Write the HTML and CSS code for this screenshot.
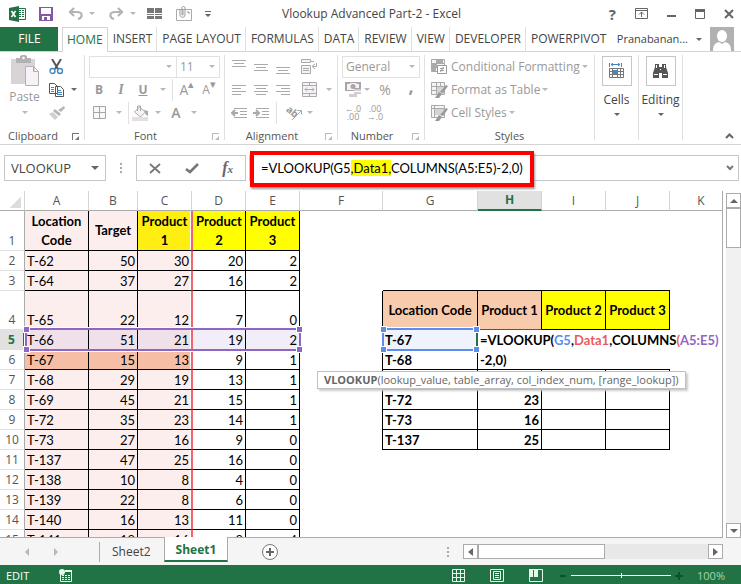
FILE: index.html
```
<!DOCTYPE html>
<html lang="en">
<head>
    <meta charset="UTF-8">
    <meta name="viewport" content="width=device-width, initial-scale=1.0">
    <title>Vlookup Advanced Part-2 - Excel</title>
    <link rel="stylesheet" href="styles.css">
</head>
<body>
    <header class="titlebar">
        <div class="quick-access">
            <svg class="logo" width="17" height="16" viewBox="0 0 17 16"><path fill="#217346" d="M0 2l10-2v16L0 14z"/><path fill="#fff" stroke="#217346" d="M9.500 2.500h7v11h-7z"/><path stroke="#217346" stroke-dasharray="2 1" d="M10 4.500h6M10 6.500h6M10 8.500h6M10 10.500h6"/><path stroke="#fff" stroke-width="1.600" d="M2.500 5l4 6M6.500 5l-4 6"/></svg>
            <button class="qa qa-save" aria-label="Save"><svg width="14" height="14" viewBox="0 0 14 14"><path fill="#8657a9" d="M0 0h14v14H0z"/><path fill="#fff" d="M2 1h10v6H2zM3 9h8v4H3z"/><path fill="#8657a9" d="M5 10h3v3H5z"/></svg></button>
            <button class="qa qa-undo" aria-label="Undo"><svg width="15" height="13" viewBox="0 0 15 13"><path fill="none" stroke="#b4b4b4" stroke-width="2.200" d="M6 1L2 5l4 4M2 5h7c6 0 6 6 1 7"/></svg><i class="caret pale"></i></button>
            <button class="qa qa-redo" aria-label="Redo"><svg width="15" height="13" viewBox="0 0 15 13"><path fill="none" stroke="#b4b4b4" stroke-width="2.200" d="M9 1l4 4-4 4M13 5H6C0 5 0 11 5 12"/></svg><i class="caret pale"></i></button>
            <button class="qa qa-split" aria-label="Arrange"><svg width="15" height="12" viewBox="0 0 15 12"><path fill="#777" d="M0 0h7v5H0zM8 0h7v5H8zM0 6h7v1H0zM8 6h7v1H8zM0 8h7v3H0zM8 8h7v3H8z"/></svg></button>
            <button class="qa qa-mail" aria-label="Email"><svg width="16" height="15" viewBox="0 0 16 15"><path fill="#fff" stroke="#aaa" d="M.5 3.500h15v11H.5z"/><path fill="none" stroke="#999" d="M4 3v6c0 3 5 3 5 0V2c0-2-3-2-3 0v7h1V4M11 6h2v2"/></svg></button>
            <button class="qa" aria-label="Customize"><svg width="6" height="6" viewBox="0 0 6 6"><path fill="#666" d="M0 0h6v1H0zM0 3h6L3 6z"/></svg></button>
        </div>
        <h1 class="title">Vlookup Advanced Part-2 - Excel</h1>
        <div class="window-buttons">
            <button class="help" aria-label="Help">?</button>
            <button aria-label="Ribbon options"><svg width="13" height="11" viewBox="0 0 13 11"><path fill="none" stroke="#666" d="M.5.5h12v10H.5zM1 2.500h11M6.500 9V4M4 6.500L6.500 4 9 6.500"/></svg></button>
            <button aria-label="Minimize"><svg width="9" height="10" viewBox="0 0 9 10"><path fill="#666" d="M0 6h9v2H0z"/></svg></button>
            <button aria-label="Maximize"><svg width="10" height="10" viewBox="0 0 10 10"><path fill="none" stroke="#666" d="M.5.5h9v9h-9z"/><path fill="#666" d="M0 0h10v3H0z"/></svg></button>
            <button aria-label="Close"><svg width="10" height="10" viewBox="0 0 10 10"><path stroke="#666" stroke-width="2" d="M1 1l8 8M9 1L1 9"/></svg></button>
        </div>
    </header>

    <nav class="tabs">
        <button class="tab file">FILE</button>
        <button class="tab active">HOME</button>
        <button class="tab">INSERT</button>
        <button class="tab">PAGE LAYOUT</button>
        <button class="tab">FORMULAS</button>
        <button class="tab">DATA</button>
        <button class="tab">REVIEW</button>
        <button class="tab">VIEW</button>
        <button class="tab">DEVELOPER</button>
        <button class="tab">POWERPIVOT</button>
        <button class="account">Pranabanan... <i class="caret"></i>
            <svg width="24" height="24" viewBox="0 0 24 24"><path fill="#b1b1b1" d="M0 0h24v24H0z"/><ellipse cx="12" cy="9" rx="5" ry="6" fill="#fff"/><path fill="#fff" d="M3 24c0-6 2-8 6-9l3 2 3-2c4 1 6 3 6 9z"/></svg>
        </button>
    </nav>

    <section class="ribbon">
        <div class="group clipboard">
            <div class="group-body">
                <button class="paste">
                    <svg width="28" height="32" viewBox="0 0 28 32"><path fill="#d8d4d6" d="M0 4h24v25H0z"/><path fill="#b1b1b1" d="M5 3h4V1l2-1h3l2 1v2h4v5H5z"/><circle cx="12.500" cy="3" r="1.200" fill="#fff"/><path fill="#f7f2f8" stroke="#b1b1b1" d="M14.500 11.500h8l5 5v14h-13zM22.500 11.500v5h5"/></svg>
                    <span>Paste</span>
                    <i class="caret pale"></i>
                </button>
                <div class="clip-tools">
                    <button aria-label="Cut"><svg width="15" height="16" viewBox="0 0 15 16"><path stroke="#555" stroke-width="2" d="M3 0l6 10M12 0L6 10"/><circle cx="3.500" cy="12" r="2.500" fill="none" stroke="#4585c0" stroke-width="1.400"/><circle cx="11" cy="12" r="2.500" fill="none" stroke="#4585c0" stroke-width="1.400"/></svg></button>
                    <button aria-label="Copy"><svg width="15" height="14" viewBox="0 0 15 14"><path fill="#fff" stroke="#555" d="M.5.500h5l3 3v7h-8zM6.500 3.500h5l3 3v7h-8z"/><path stroke="#4585c0" d="M2 4.500h3M2 6.500h3M2 8.500h3M8 7.500h4M8 9.500h5M8 11.500h5"/></svg><i class="caret"></i></button>
                    <button aria-label="Format painter"><svg width="16" height="14" viewBox="0 0 16 14"><path fill="#b9b4b8" d="M15 0l1 2-4 4-3-2zM6 3l6 5-2 2-6-5z"/><path fill="#d2cdd1" d="M4 6l5 5-3 3-6-6z"/></svg></button>
                </div>
            </div>
            <div class="group-label">Clipboard<i class="launcher dark"></i></div>
        </div>

        <div class="group font">
            <div class="group-body rows">
                <div class="row">
                    <select class="combo name" aria-label="Font"><option></option></select>
                    <select class="combo size" aria-label="Font size"><option>11</option></select>
                </div>
                <div class="row">
                    <button class="tool bold">B</button>
                    <button class="tool italic">I</button>
                    <button class="tool underline">U</button>
                    <i class="caret pale"></i>
                    <span class="divider"></span>
                    <button class="tool grow">A<sup>▴</sup></button>
                    <button class="tool shrink">A<sup>▾</sup></button>
                </div>
                <div class="row">
                    <button class="tool" aria-label="Borders"><svg width="13" height="13" viewBox="0 0 13 13"><path fill="#fbf7fc" stroke="#a5a5a5" d="M.5.5h12v12H.5zM6.500 0v13M0 6.500h13"/></svg></button>
                    <i class="caret pale"></i>
                    <span class="divider"></span>
                    <button class="tool fill" aria-label="Fill color"><svg width="17" height="16" viewBox="0 0 17 16"><path fill="#f7f2f8" stroke="#aaa" d="M2.500 7l5-5 6 5-5 5zM5.500 6V1h3v5"/><path fill="#aaa" d="M12 5l4 1v5l-2-1z"/><path fill="#e3dfe2" d="M0 12h16v4H0z"/></svg></button>
                    <i class="caret pale tight"></i>
                    <button class="tool font-color">A</button>
                    <i class="caret pale tight"></i>
                </div>
            </div>
            <div class="group-label">Font<i class="launcher"></i></div>
        </div>

        <div class="group alignment">
            <div class="group-body rows">
                <div class="row">
                    <button class="tool" aria-label="Top align"><svg width="14" height="14" viewBox="0 0 14 14"><path stroke="#aaa" d="M0 .5h14M2 3.500h10M0 6.500h14"/></svg></button>
                    <button class="tool" aria-label="Middle align"><svg width="14" height="14" viewBox="0 0 14 14"><path stroke="#aaa" d="M0 4.500h14M2 7.500h10M0 10.500h14"/></svg></button>
                    <button class="tool" aria-label="Bottom align"><svg width="14" height="14" viewBox="0 0 14 14"><path stroke="#aaa" d="M0 7.500h14M2 10.500h10M0 13.500h14"/></svg></button>
                    <button class="tool wide" aria-label="Wrap text"><svg width="16" height="15" viewBox="0 0 16 15"><path fill="#f7f2f8" stroke="#aaa" d="M.5.5h9v3h-9zM.5 6.500h9v8h-9z"/><path fill="none" stroke="#aaa" d="M2 9.500h6M2 11.500h6M10 2.500h3M15.500 4v3.500H12M14 5l-3 2.500L14 10"/></svg></button>
                </div>
                <div class="row">
                    <button class="tool" aria-label="Align left"><svg width="14" height="12" viewBox="0 0 14 12"><path stroke="#aaa" d="M0 1.500h14M0 4.500h9M0 7.500h14M0 10.500h9"/></svg></button>
                    <button class="tool" aria-label="Center"><svg width="14" height="12" viewBox="0 0 14 12"><path stroke="#aaa" d="M0 1.500h14M2 4.500h10M0 7.500h14M2 10.500h10"/></svg></button>
                    <button class="tool" aria-label="Align right"><svg width="14" height="12" viewBox="0 0 14 12"><path stroke="#aaa" d="M0 1.500h14M5 4.500h9M0 7.500h14M5 10.500h9"/></svg></button>
                    <button class="tool wide" aria-label="Merge and center"><svg width="15" height="15" viewBox="0 0 15 15"><path fill="#f7f2f8" stroke="#aaa" d="M.5.5h14v14H.5zM0 3.500h15M0 11.500h15M7.500 0v3M7.500 12v3M3 7.500h9M5 5.500l-2 2 2 2M10 5.500l2 2-2 2"/></svg></button>
                    <i class="caret pale"></i>
                </div>
                <div class="row">
                    <button class="tool" aria-label="Decrease indent"><svg width="16" height="12" viewBox="0 0 16 12"><path fill="none" stroke="#aaa" d="M3 1.500h13M9 4.500h7M9 7.500h7M3 10.500h13"/><path fill="none" stroke="#aaa" stroke-width="2" d="M7 6H1M4 3L1 6l3 3"/></svg></button>
                    <button class="tool" aria-label="Increase indent"><svg width="16" height="12" viewBox="0 0 16 12"><path fill="none" stroke="#aaa" d="M3 1.500h13M9 4.500h7M9 7.500h7M3 10.500h13"/><path fill="none" stroke="#aaa" stroke-width="2" d="M0 6h6M3 3l3 3-3 3"/></svg></button>
                    <span class="divider"></span>
                    <button class="tool" aria-label="Orientation"><svg class="orient" width="17" height="16" viewBox="0 0 17 16"><text x="0" y="10" font-size="10" font-weight="700" fill="#999" transform="rotate(40 6 7)">ab</text><path fill="none" stroke="#aaa" d="M6 15l9-9M11.500 5.500h4v4"/></svg></button>
                    <i class="caret pale"></i>
                </div>
            </div>
            <div class="group-label">Alignment<i class="launcher"></i></div>
        </div>

        <div class="group number">
            <div class="group-body rows">
                <div class="row">
                    <select class="combo format" aria-label="Number format"><option>General</option></select>
                </div>
                <div class="row">
                    <button class="tool" aria-label="Accounting format"><svg width="17" height="16" viewBox="0 0 17 16"><path fill="#a9a5a8" d="M0 0h16v9H0z"/><path fill="#f7f2f8" d="M2 2h2l2-1h4l3 1h1v4H9v2H2z"/><circle cx="8" cy="4.500" r="2.500" fill="#a9a5a8"/><path fill="#d2cdd1" d="M9 7h7v2H9zM9 10h7v2H9zM4 12h8v3H4z"/></svg></button>
                    <i class="caret pale"></i>
                    <button class="tool percent">%</button>
                    <button class="tool comma">,</button>
                </div>
                <div class="row">
                    <button class="tool decimal">←.0<br>.00</button>
                    <button class="tool decimal">.00<br>→.0</button>
                </div>
            </div>
            <div class="group-label">Number<i class="launcher"></i></div>
        </div>

        <div class="group styles">
            <div class="group-body rows">
                <button class="style-button"><svg width="17" height="17" viewBox="0 0 17 17"><path fill="#f7f2f8" stroke="#aaa" d="M.5 1.500h13v12H.5zM.5 5.500h13M.5 9.500h13"/><path fill="#aaa" d="M5 1h7v4H5zM0 6h6v3H0zM0 10h5v3H0z"/><path fill="#fff" stroke="#999" d="M6.500 7.500h9v8h-9zM9 10.500h4M9 12.500h4M12.500 9l-3 5"/></svg>Conditional Formatting<i class="caret pale"></i></button>
                <button class="style-button"><svg width="17" height="17" viewBox="0 0 17 17"><path fill="#f7f2f8" stroke="#aaa" d="M.5 1.500h13v12H.5zM.5 5.500h13M.5 9.500h13M5.500 1v12M9.500 1v12"/><path fill="#d8d2d7" d="M6 6h7v7H6z"/><path fill="#999" d="M15 4l2 1-5 7-3-1zM8 11l3 2-3 4H4z"/></svg>Format as Table<i class="caret pale"></i></button>
                <button class="style-button"><svg width="17" height="17" viewBox="0 0 17 17"><path fill="#f7f2f8" stroke="#aaa" d="M.5 1.500h13v12H.5zM.5 4.500h13M3.500 1v12"/><path fill="#d8d2d7" d="M4 5h9v6H4z"/><path fill="#999" d="M15 4l2 1-5 7-3-1zM8 11l3 2-3 4H4z"/></svg>Cell Styles<i class="caret pale"></i></button>
            </div>
            <div class="group-label">Styles</div>
        </div>

        <div class="group compact">
            <button class="big-button">
                <span class="big-icon"><svg width="15" height="16" viewBox="0 0 15 16"><path fill="none" stroke="#4585c0" d="M.5 0v4M12.500 0v4M2 1.500h9M4 0L2 1.500 4 3M9 0l2 1.500L9 3"/><path fill="#fff" stroke="#777" d="M.5 5.500h14v9H.5zM0 8.500h15M0 11.500h15M3.500 5v10M8.500 5v10M11.500 5v10"/><path fill="#4585c0" d="M4 7h5v4H4z"/></svg></span>
                Cells
                <i class="caret"></i>
            </button>
        </div>
        <div class="group compact">
            <button class="big-button">
                <span class="big-icon"><svg width="15" height="14" viewBox="0 0 15 14"><path fill="#555" d="M2 0h4v3h3V0h4v3l2 6v5H9V9H6v5H0V9l2-6z"/><path stroke="#fff" d="M1 10.500h4M10 10.500h4M3.500 1v3M11.500 1v3M7 5.500h1"/></svg></span>
                Editing
                <i class="caret"></i>
            </button>
        </div>
        <button class="collapse" aria-label="Collapse the ribbon"><svg width="9" height="6" viewBox="0 0 9 6"><path fill="none" stroke="#666" stroke-width="2" d="M1 5l3.500-3.500L8 5"/></svg></button>
    </section>

    <section class="formula-bar">
        <label class="name-box"><input type="text" value="VLOOKUP" aria-label="Name box"><i class="caret wide-caret"></i></label>
        <span class="grip"></span>
        <div class="formula-buttons">
            <button aria-label="Cancel"><svg width="12" height="11" viewBox="0 0 12 11"><path stroke="#777" stroke-width="1.800" d="M1 1l10 9M11 1L1 10"/></svg></button>
            <button aria-label="Enter"><svg width="14" height="11" viewBox="0 0 14 11"><path fill="none" stroke="#777" stroke-width="2.600" d="M1 6l4 3 8-8"/></svg></button>
            <button class="fx" aria-label="Insert function">f<small>x</small></button>
        </div>
        <div class="formula-field">
            <div class="formula" contenteditable="true" role="textbox" aria-label="Formula" spellcheck="false">=VLOOKUP(G5<mark>,Data1,</mark>COLUMNS(A5:E5)-2,0)</div>
            <button class="expand" aria-label="Expand"><svg width="8" height="6" viewBox="0 0 8 6"><path fill="none" stroke="#777" stroke-width="2" d="M1 1l3 3 3-3"/></svg></button>
        </div>
    </section>

    <main class="workspace">
        <div class="grid">
            <table class="sheet">
                <colgroup>
                    <col class="w-head"><col class="w-a"><col class="w-b"><col class="w-c"><col class="w-c"><col class="w-c"><col class="w-f"><col class="w-g"><col class="w-a"><col class="w-a"><col class="w-a"><col>
                </colgroup>
                <thead>
                    <tr><th class="corner"></th><th>A</th><th>B</th><th>C</th><th>D</th><th>E</th><th>F</th><th>G</th><th class="current">H</th><th>I</th><th>J</th><th class="last">K</th></tr>
                </thead>
                <tbody>
                    <tr class="tall heading"><th>1</th><td class="b p">Location Code</td><td class="b p">Target</td><td class="b gold edge">Product 1</td><td class="b yellow after">Product 2</td><td class="b yellow">Product 3</td><td></td><td></td><td></td><td></td><td></td><td></td></tr>
                    <tr><th>2</th><td class="b p t">T-62</td><td class="b p">50</td><td class="b p edge">30</td><td class="b after">20</td><td class="b">2</td><td></td><td></td><td></td><td></td><td></td><td></td></tr>
                    <tr><th>3</th><td class="b p t">T-64</td><td class="b p">37</td><td class="b p edge">27</td><td class="b after">16</td><td class="b">2</td><td></td><td class="top"></td><td class="top"></td><td class="top"></td><td class="top"></td><td></td></tr>
                    <tr class="tall four"><th>4</th><td class="b p t">T-65</td><td class="b p">22</td><td class="b p edge">12</td><td class="b after">7</td><td class="b">0</td><td class="right"></td><td class="b peach title-cell">Location Code</td><td class="b peach title-cell over-active">Product 1</td><td class="b yellow title-cell">Product 2</td><td class="b yellow title-cell">Product 3</td><td></td></tr>
                    <tr class="current-row"><th>5</th><td class="b lilac t anchor">T-66<div class="range purple"><i></i><i></i><i></i><i></i></div></td><td class="b lilac">51</td><td class="b lilac edge">21</td><td class="b lavender after">19</td><td class="b lavender">2</td><td class="right"></td><td class="b t strong blue anchor">T-67<div class="range azure"><i></i><i></i><i></i><i></i></div></td><td class="anchor"><div class="editor" contenteditable="true" spellcheck="false">=VLOOKUP(<span class="c-blue">G5</span>,<span class="c-red">Data1</span>,COLUMNS<span class="c-red">(</span><span class="c-purple">A5:E5)</span><br>-2,0)</div></td><td></td><td></td><td></td></tr>
                    <tr><th>6</th><td class="b orange t">T-67</td><td class="b orange">15</td><td class="b orange edge">13</td><td class="b after">9</td><td class="b">1</td><td class="right"></td><td class="b t strong">T-68</td><td class="top"></td><td class="top"></td><td class="top"></td><td></td></tr>
                    <tr><th>7</th><td class="b p t">T-68</td><td class="b p">29</td><td class="b p edge">19</td><td class="b after">13</td><td class="b">1</td><td class="right anchor"><div class="tip"><b>VLOOKUP</b>(lookup_value, table_array, col_index_num, [range_lookup])</div></td><td class="b t strong"></td><td class="b"></td><td class="b"></td><td class="b"></td><td></td></tr>
                    <tr><th>8</th><td class="b p t">T-69</td><td class="b p">45</td><td class="b p edge">21</td><td class="b after">15</td><td class="b">1</td><td class="right"></td><td class="b t strong">T-72</td><td class="b strong">23</td><td class="b"></td><td class="b"></td><td></td></tr>
                    <tr><th>9</th><td class="b p t">T-72</td><td class="b p">35</td><td class="b p edge">23</td><td class="b after">14</td><td class="b">1</td><td class="right"></td><td class="b t strong">T-73</td><td class="b strong">16</td><td class="b"></td><td class="b"></td><td></td></tr>
                    <tr><th>10</th><td class="b p t">T-73</td><td class="b p">27</td><td class="b p edge">16</td><td class="b after">9</td><td class="b">0</td><td class="right"></td><td class="b t strong">T-137</td><td class="b strong">25</td><td class="b"></td><td class="b"></td><td></td></tr>
                    <tr><th>11</th><td class="b p t">T-137</td><td class="b p">47</td><td class="b p edge">25</td><td class="b after">16</td><td class="b">0</td><td></td><td></td><td></td><td></td><td></td><td></td></tr>
                    <tr><th>12</th><td class="b p t">T-138</td><td class="b p">10</td><td class="b p edge">8</td><td class="b after">4</td><td class="b">0</td><td></td><td></td><td></td><td></td><td></td><td></td></tr>
                    <tr><th>13</th><td class="b p t">T-139</td><td class="b p">22</td><td class="b p edge">8</td><td class="b after">6</td><td class="b">0</td><td></td><td></td><td></td><td></td><td></td><td></td></tr>
                    <tr><th>14</th><td class="b p t">T-140</td><td class="b p">16</td><td class="b p edge">13</td><td class="b after">11</td><td class="b">0</td><td></td><td></td><td></td><td></td><td></td><td></td></tr>
                    <tr><th>15</th><td class="b p t">T-141</td><td class="b p">18</td><td class="b p edge">16</td><td class="b after">8</td><td class="b">4</td><td></td><td></td><td></td><td></td><td></td><td></td></tr>
                </tbody>
            </table>
        </div>
        <div class="vscroll">
            <button aria-label="Scroll up"><i class="caret up"></i></button>
            <div class="thumb"></div>
            <button class="down" aria-label="Scroll down"><i class="caret wide-caret"></i></button>
        </div>
    </main>

    <nav class="sheet-tabs">
        <button class="arrow" aria-label="Previous sheet"><svg width="4" height="8" viewBox="0 0 4 8"><path fill="#b8b8b8" d="M4 0v8L0 4z"/></svg></button>
        <button class="arrow" aria-label="Next sheet"><svg width="4" height="8" viewBox="0 0 4 8"><path fill="#b8b8b8" d="M0 0v8l4-4z"/></svg></button>
        <button class="sheet-tab">Sheet2</button>
        <button class="sheet-tab selected">Sheet1</button>
        <button class="add" aria-label="New sheet"><svg width="16" height="16" viewBox="0 0 16 16"><circle cx="8" cy="8" r="7.500" fill="#fff" stroke="#777"/><path stroke="#666" stroke-width="2" d="M8 4v8M4 8h8"/></svg></button>
        <span class="grip"></span>
        <div class="hscroll">
            <button aria-label="Scroll left"><svg width="5" height="8" viewBox="0 0 5 8"><path fill="#666" d="M5 0v8L0 4z"/></svg></button>
            <div class="thumb"></div>
            <button class="end" aria-label="Scroll right"><svg width="5" height="8" viewBox="0 0 5 8"><path fill="#666" d="M0 0v8l5-4z"/></svg></button>
        </div>
    </nav>

    <footer class="status">
        <span>EDIT</span>
        <svg class="macro" width="13" height="13" viewBox="0 0 13 13"><path fill="none" stroke="#e8f5ec" d="M1.500 5v7.500h11v-11H6"/><path fill="#e8f5ec" d="M6 1h7v2H6z"/><path stroke="#e8f5ec" stroke-dasharray="2 1" d="M3 6.500h9M3 8.500h9M3 10.500h9"/><circle cx="3" cy="3" r="3" fill="#e8f5ec"/></svg>
        <div class="views">
            <button aria-label="Normal view"><svg width="13" height="13" viewBox="0 0 13 13"><path fill="none" stroke="#e8f5ec" d="M.5.500h12v12H.500zM4.500 0v13M8.500 0v13M0 4.500h13M0 8.500h13"/></svg></button>
            <button aria-label="Page layout view"><svg width="14" height="13" viewBox="0 0 14 13"><path fill="none" stroke="#e8f5ec" d="M.5.500h13v12H.500zM3.500 2.500h7v8h-7zM5 4.500h4M5 6.500h4M5 8.500h4"/></svg></button>
            <button aria-label="Page break view"><svg width="14" height="13" viewBox="0 0 14 13"><path fill="none" stroke="#e8f5ec" d="M.5.500h13v12H.500z"/><path fill="#e8f5ec" d="M0 0h4v8H0zM5 0h4v8H5z"/></svg></button>
        </div>
        <button class="zoom-step" aria-label="Zoom out"><svg width="8" height="8" viewBox="0 0 8 8"><path fill="#0e5229" d="M1 3h6v2H1z"/></svg></button>
        <input class="zoom" type="range" min="10" max="190" value="100" aria-label="Zoom">
        <button class="zoom-step" aria-label="Zoom in"><svg width="8" height="8" viewBox="0 0 8 8"><path fill="#0e5229" d="M0 3h8v2H0zM3 0h2v8H3z"/></svg></button>
        <span class="percent-label">100%</span>
    </footer>
</body>
</html>
```
FILE: styles.css
```
* {
    box-sizing: border-box;
}

body {
    margin: 0;
    height: 100vh;
    display: flex;
    flex-direction: column;
    overflow: hidden;
    background-color: #fff;
    color: #444;
    font-family: "Open Sans", "Noto Sans", sans-serif;
    font-size: 12px;
    line-height: 16px;
    white-space: nowrap;
}

button {
    font: inherit;
    color: inherit;
    background: none;
    border: none;
    margin: 0;
    padding: 0;
    cursor: pointer;
}

svg {
    display: block;
    flex: none;
}

.caret {
    display: inline-block;
    flex: none;
    border: 3px solid transparent;
    border-top-color: #666;
    border-bottom: none;
}

.caret.pale {
    border-top-color: #b8b8b8;
}

.caret.wide-caret {
    border-width: 4px 4px 0;
}

.caret.up {
    border-width: 0 4px 4px;
    border-bottom: 4px solid #666;
}

/* title bar */
.titlebar {
    display: flex;
    align-items: center;
    height: 27px;
    flex: none;
    padding: 0 7px 0 9px;
}

.quick-access {
    display: flex;
    align-items: center;
    flex: 1;
}

.qa {
    display: flex;
    align-items: center;
    gap: 6px;
}

.qa-save {
    margin: 0 15px 0 13px;
}

.qa-undo {
    margin-right: 14px;
}

.qa-redo {
    margin-right: 11px;
}

.qa-split {
    margin-right: 14px;
}

.qa-mail {
    margin-right: 13px;
}

.title {
    margin: 0;
    font-size: 12px;
    font-weight: 400;
}

.window-buttons {
    display: flex;
    align-items: center;
    justify-content: flex-end;
    gap: 19px;
    flex: 1;
}

.help {
    font-size: 15px;
    font-weight: 700;
    color: #666;
}

/* ribbon tabs */
.tabs {
    display: flex;
    height: 25px;
    flex: none;
    border-bottom: 1px solid #d4d4d4;
}

.tab {
    flex: none;
    padding: 0 4px 1px 5px;
    border-right: 1px solid #e1e1e1;
}

.tab.file {
    width: 58px;
    margin-right: 4px;
    background-color: #217346;
    color: #fff;
    border: none;
}

.tab.active {
    height: 25px;
    padding: 0 4px 1px;
    background-color: #fff;
    color: #217346;
    border: 1px solid #d4d4d4;
    border-bottom: none;
}

.tab:nth-last-child(2) {
    border-right: none;
}

.account {
    display: flex;
    align-items: center;
    gap: 8px;
    margin: 0 7px 0 auto;
    font-size: 11px;
}

/* ribbon */
.ribbon {
    display: flex;
    height: 93px;
    flex: none;
    padding-top: 3px;
    border-bottom: 1px solid #d4d4d4;
}

.group {
    display: flex;
    flex-direction: column;
    flex: none;
    margin-bottom: 4px;
    border-right: 1px solid #e1e1e1;
}

.group-body {
    display: flex;
    height: 73px;
    flex: none;
}

.rows {
    flex-direction: column;
}

.row {
    display: flex;
    align-items: center;
    height: 23px;
}

.group-label {
    position: relative;
    font-size: 11px;
    text-align: center;
    line-height: 16px;
    padding-right: 18px;
    color: #555;
}

.launcher {
    position: absolute;
    right: 5px;
    top: 5px;
    width: 7px;
    height: 7px;
    border-left: 1px solid #bbb;
    border-top: 1px solid #bbb;
}

.launcher::after {
    content: "";
    position: absolute;
    right: 0;
    bottom: 0;
    border: 2px solid #bbb;
    border-left-color: transparent;
    border-top-color: transparent;
}

.launcher.dark {
    border-color: #777;
}

.launcher.dark::after {
    border-right-color: #777;
    border-bottom-color: #777;
}

.clipboard {
    width: 85px;
}

.font {
    width: 140px;
}

.alignment {
    width: 113px;
}

.number {
    width: 87px;
}

.styles {
    width: 170px;
}

.compact {
    width: 44px;
}

.paste {
    display: flex;
    flex-direction: column;
    align-items: center;
    width: 49px;
    color: #999;
}

.paste span {
    margin-top: 2px;
}

.paste .caret {
    margin-top: 6px;
}

.clip-tools button {
    display: flex;
    align-items: center;
    gap: 7px;
    height: 23px;
}

.combo {
    appearance: none;
    height: 22px;
    padding: 0 3px;
    border: 1px solid #e1e1e1;
    border-radius: 0;
    background: #fff url("data:image/svg+xml,%3Csvg xmlns='http://www.w3.org/2000/svg' width='6' height='3'%3E%3Cpath fill='%23b8b8b8' d='M0 0h6L3 3z'/%3E%3C/svg%3E") no-repeat right 4px center;
    color: #999;
    font: inherit;
}

.combo.name {
    width: 88px;
    margin-left: 4px;
}

.combo.size {
    width: 43px;
    border-left: none;
}

.combo.format {
    width: 78px;
}

.tool {
    display: flex;
    align-items: center;
    justify-content: center;
    flex: none;
    width: 22px;
    height: 22px;
    color: #999;
}

.tool.wide {
    width: 30px;
}

.font .tool:first-child {
    margin-left: 3px;
}

.font .caret {
    margin: 0 6px;
}

.font .caret.tight {
    margin: 0 4px;
}

.alignment .row {
    padding-left: 3px;
}

.alignment .divider {
    margin: 0 6px 0 4px;
}

.alignment .caret {
    margin-left: 2px;
}

.orient {
    overflow: visible;
}

.divider {
    width: 1px;
    height: 22px;
    background-color: #e1e1e1;
}

.bold,
.italic,
.underline {
    font-weight: 700;
}

.italic {
    font-family: "Liberation Serif", serif;
    font-style: italic;
    font-size: 14px;
}

.underline {
    text-decoration: underline;
}

.grow {
    padding-left: 6px;
    font-size: 14px;
}

.shrink {
    padding-left: 6px;
    font-size: 12px;
}

.tool sup {
    font-size: 11px;
    line-height: 10px;
    align-self: flex-start;
}

.font-color {
    font-size: 14px;
    font-weight: 600;
}

.number .row {
    padding-left: 4px;
}

.percent {
    width: 30px;
    font-size: 14px;
}

.comma {
    font-size: 18px;
    font-weight: 700;
    align-items: flex-start;
    line-height: 14px;
}

.decimal {
    font-size: 9px;
    line-height: 8px;
}

.styles .group-label {
    padding-right: 0;
}

.style-button {
    display: flex;
    align-items: center;
    gap: 3px;
    height: 23px;
    padding-left: 6px;
    color: #999;
}

.style-button .caret {
    margin-left: -1px;
}

.big-button {
    display: flex;
    flex-direction: column;
    align-items: center;
    padding-top: 1px;
    line-height: 17px;
}

.big-icon {
    display: flex;
    align-items: center;
    justify-content: center;
    width: 30px;
    height: 30px;
    margin-bottom: 5px;
    border: 1px solid #c6c6c6;
}

.big-button .caret {
    margin-top: 5px;
}

.collapse {
    margin: auto 7px 5px auto;
}

/* formula bar */
.formula-bar {
    display: flex;
    height: 46px;
    flex: none;
    padding: 10px 2px 10px 4px;
}

.name-box {
    display: flex;
    align-items: center;
    width: 102px;
    padding: 0 6px;
    border: 1px solid #c6c6c6;
}

.name-box input {
    flex: 1;
    min-width: 0;
    padding: 0;
    border: none;
    outline: none;
    color: #444;
    font: inherit;
    font-size: 13px;
}

.grip {
    width: 2px;
    height: 10px;
    margin: auto 14px;
    background: repeating-linear-gradient(#aaa 0 2px, transparent 2px 4px);
}

.formula-buttons {
    display: flex;
    align-items: center;
    justify-content: space-between;
    width: 110px;
    padding: 0 12px;
    border: 1px solid #c6c6c6;
}

.fx {
    font: italic 700 16px "Liberation Serif", serif;
    color: #666;
}

.fx small {
    font-size: 11px;
}

.formula-field {
    position: relative;
    display: flex;
    align-items: center;
    flex: 1;
    margin-left: 3px;
    border: 1px solid #c6c6c6;
}

.formula {
    position: absolute;
    left: 0;
    top: -5px;
    height: 36px;
    padding: 5px 7px;
    border: 4px solid #fe0000;
    box-shadow: 1px 2px 2px #999;
    background-color: #fff;
    color: #000;
    font-family: Lato, sans-serif;
    font-size: 13px;
    line-height: 17px;
}

.formula mark {
    background-color: #ff0;
    color: inherit;
}

.expand {
    margin: 0 4px 0 auto;
}

/* worksheet */
.workspace {
    display: flex;
    flex: 1;
    min-height: 0;
}

.grid {
    flex: 1;
    overflow: hidden;
    border-right: 1px solid #ababab;
    border-bottom: 1px solid #ababab;
}

.sheet {
    width: 100%;
    table-layout: fixed;
    border-spacing: 0;
    color: #000;
    font-family: Lato, sans-serif;
    font-size: 13px;
}

.w-head {
    width: 25px;
}

.w-a {
    width: 64px;
}

.w-b {
    width: 49px;
}

.w-c {
    width: 54px;
}

.w-f {
    width: 83px;
}

.w-g {
    width: 95px;
}

.sheet th {
    padding: 0;
    color: #555;
    font-family: "Open Sans", sans-serif;
    font-size: 12px;
    font-weight: 400;
    vertical-align: bottom;
    line-height: 18px;
}

.sheet thead th {
    height: 20px;
    vertical-align: middle;
    border-right: 1px solid #d4d4d4;
    border-bottom: 1px solid #ababab;
}

.sheet tbody th {
    border-right: 1px solid #ababab;
    border-bottom: 1px solid #e1e1e1;
}

.sheet thead .current {
    background-color: #e1e1e1;
    color: #217346;
    font-weight: 700;
    border-bottom: 2px solid #217346;
}

.sheet thead .last {
    border-right: none;
    padding-left: 10px;
}

.sheet .corner {
    background: linear-gradient(135deg, transparent 50%, #dcdcdc 50%) no-repeat 9px 5px / 12px 12px;
}

.sheet .current-row th {
    background-color: #e1e1e1;
    color: #217346;
    font-weight: 700;
    border-right: 2px solid #217346;
}

.sheet td {
    height: 20px;
    padding: 0 2px;
    text-align: right;
    vertical-align: bottom;
    line-height: 18px;
}

.sheet .tall td {
    height: 40px;
}

.sheet .four td {
    height: 39px;
}

.sheet .heading td {
    padding: 0;
    text-align: center;
    vertical-align: middle;
    white-space: normal;
    font-weight: 700;
    line-height: 19px;
}

.sheet .title-cell {
    padding: 0;
    text-align: center;
    vertical-align: middle;
    font-weight: 700;
}

.sheet .b {
    border-right: 1px solid #000;
    border-bottom: 1px solid #000;
}

.sheet .over-active {
    border-bottom-color: #217346;
}

.sheet .t {
    text-align: left;
}

.sheet .strong {
    font-weight: 700;
}

.sheet .top {
    border-bottom: 1px solid #000;
}

.sheet .right {
    border-right: 1px solid #000;
}

.p {
    background-color: #fdeeee;
}

.gold {
    background-color: #ffee11;
}

.yellow {
    background-color: #ff0;
}

.peach {
    background-color: #f8cbad;
}

.orange {
    background-color: #f6bfa5;
}

.lilac {
    background-color: #efe0ea;
}

.lavender {
    background-color: #f1eefa;
}

.blue {
    background-color: #eef3fe;
}

.sheet .edge {
    border-right-color: #f0646a;
    box-shadow: inset -1px 0 #fff;
}

.sheet .after {
    border-left: 1px solid #f0646a;
}

.anchor {
    position: relative;
}

/* coloured outline round a referenced range */
.range {
    position: absolute;
    left: 0;
    top: -2px;
    height: 23px;
    border: 2px solid;
    outline: 1px solid #fff;
    z-index: 1;
    pointer-events: none;
}

.range.purple {
    width: 276px;
    border-color: #8e66c4;
    color: #8e66c4;
}

.range.azure {
    left: -1px;
    width: 96px;
    border-color: #5b8def;
    border-right-color: #217346;
    color: #5b8def;
    z-index: 3;
}

.range i {
    position: absolute;
    width: 5px;
    height: 5px;
    background-color: currentColor;
    outline: 1px solid #fff;
}

.range i:nth-child(1) {
    left: -3px;
    top: -3px;
}

.range i:nth-child(2) {
    right: -3px;
    top: -3px;
}

.range i:nth-child(3) {
    left: -3px;
    bottom: -3px;
}

.range i:nth-child(4) {
    right: -3px;
    bottom: -3px;
}

.editor {
    position: absolute;
    left: 0;
    top: 0;
    z-index: 2;
    width: 244px;
    height: 39px;
    padding-left: 2px;
    background-color: #fff;
    text-align: left;
    font-weight: 700;
    line-height: 20px;
}

.c-blue {
    color: #5b8def;
}

.c-red {
    color: #e85c61;
}

.c-purple {
    color: #8e66c4;
}

.tip {
    position: absolute;
    left: 17px;
    top: 1px;
    z-index: 4;
    height: 18px;
    padding: 0 6px;
    border: 1px solid #c0c0c0;
    box-shadow: 2px 2px 2px #ccc;
    background-color: #fff;
    color: #666;
    font-family: "Open Sans", sans-serif;
    font-size: 11px;
    line-height: 15px;
    text-align: left;
}

.vscroll {
    display: flex;
    flex-direction: column;
    width: 15px;
    margin: 2px 0 0 3px;
    background-color: #f1f1f1;
}

.vscroll button,
.hscroll button {
    display: flex;
    align-items: center;
    justify-content: center;
    width: 15px;
    height: 15px;
    flex: none;
    border: 1px solid #ababab;
    background-color: #fff;
}

.vscroll .thumb {
    height: 40px;
    border: 1px solid #ababab;
    background-color: #fff;
}

.vscroll .down {
    margin-top: auto;
}

/* sheet tabs */
.sheet-tabs {
    display: flex;
    align-items: center;
    height: 27px;
    flex: none;
    padding-right: 18px;
    background-color: #f5f5f5;
}

.arrow {
    margin-left: 25px;
}

.sheet-tab {
    height: 20px;
    margin-left: 41px;
    padding: 0 13px 0 12px;
    border-left: 1px solid #ababab;
}

.sheet-tab.selected {
    position: relative;
    align-self: flex-start;
    height: 25px;
    margin: -1px 0 0;
    padding: 2px 11px 0;
    background-color: #fff;
    border: 1px solid #ababab;
    border-top: none;
    border-bottom: 2px solid #217346;
    color: #217346;
    font-weight: 700;
}

.add {
    margin-left: 34px;
}

.sheet-tabs .grip {
    margin-left: auto;
}

.hscroll {
    display: flex;
    width: 36%;
    min-width: 120px;
    background-color: #e8e8e8;
}

.hscroll .thumb {
    width: 49%;
    border: 1px solid #ababab;
    background-color: #fff;
}

.hscroll .end {
    margin-left: auto;
}

/* status bar */
.status {
    display: flex;
    align-items: center;
    height: 19px;
    flex: none;
    padding: 2px 16px 0 6px;
    background-color: #217346;
    color: #fff;
    font-size: 11px;
}

.macro {
    margin-left: 30px;
}

.views {
    display: flex;
    gap: 25px;
    margin: 0 16px 0 auto;
}

.zoom {
    appearance: none;
    width: 100px;
    height: 11px;
    margin: 0 4px;
    background: linear-gradient(#fff, #fff) no-repeat center / 100% 1px;
}

.zoom::-webkit-slider-thumb {
    appearance: none;
    width: 1px;
    height: 5px;
    background-color: #fff;
}

.percent-label {
    margin-left: 14px;
    color: #a5d6a7;
}
```
